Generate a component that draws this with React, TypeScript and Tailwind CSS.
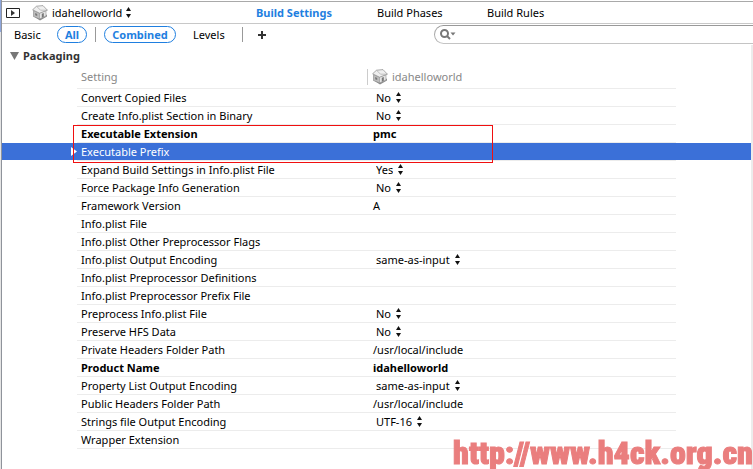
import React, {useState} from 'react';

type Row = {
    name: string;
    value?: string;
    options?: string[];
    bold?: boolean;
};

const yesNo = ["Yes", "No"];
const encodings = ["same-as-input", "UTF-8", "UTF-16", "binary"];

const rows: Row[] = [
    {name: "Convert Copied Files", value: "No", options: yesNo},
    {name: "Create Info.plist Section in Binary", value: "No", options: yesNo},
    {name: "Executable Extension", value: "pmc", bold: true},
    {name: "Executable Prefix"},
    {name: "Expand Build Settings in Info.plist File", value: "Yes", options: yesNo},
    {name: "Force Package Info Generation", value: "No", options: yesNo},
    {name: "Framework Version", value: "A"},
    {name: "Info.plist File"},
    {name: "Info.plist Other Preprocessor Flags"},
    {name: "Info.plist Output Encoding", value: "same-as-input", options: encodings},
    {name: "Info.plist Preprocessor Definitions"},
    {name: "Info.plist Preprocessor Prefix File"},
    {name: "Preprocess Info.plist File", value: "No", options: yesNo},
    {name: "Preserve HFS Data", value: "No", options: yesNo},
    {name: "Private Headers Folder Path", value: "/usr/local/include"},
    {name: "Product Name", value: "idahelloworld", bold: true},
    {name: "Property List Output Encoding", value: "same-as-input", options: encodings},
    {name: "Public Headers Folder Path", value: "/usr/local/include"},
    {name: "Strings file Output Encoding", value: "UTF-16", options: encodings},
    {name: "Wrapper Extension"},
];

function Stepper() {
    return (
        <svg className="pointer-events-none shrink-0" width="5" height="11" viewBox="0 0 5 11" fill="#111">
            <path d="M2.5 0L5 4H0zM2.5 11L0 7h5z"/>
        </svg>
    );
}

function ProjectIcon() {
    return (
        <svg className="shrink-0" width="16" height="16" viewBox="0 0 16 16" strokeLinejoin="round">
            <path d="M1 11l7 4.500 7-4V9.500l-7 3.500z" fill="#8a8a8a"/>
            <path d="M1.500 5.500v6L7.500 14V8z" fill="#bdbdbd" stroke="#888" strokeWidth=".6"/>
            <path d="M7.500 8L14 5.500V11l-6.500 3z" fill="#e4e4e4" stroke="#999" strokeWidth=".6"/>
            <path d="M.6 4.800L4.500 1.200 11 .6l4.400 4.600L7.500 8.200z" fill="#efefef" stroke="#8a8a8a" strokeWidth=".7"/>
            <path d="M4.500 1.200l4 4 6.900 0" fill="none" stroke="#aaa" strokeWidth=".7"/>
            <path d="M9.800 8.800l2-.8v3.800l-2 .9z" fill="#777"/>
            <path d="M3.200 8l2 .9v2.200l-2-.9z" fill="#777"/>
        </svg>
    );
}

export default function App() {
    const [selected, setSelected] = useState("Executable Prefix");

    return (
        <div className="flex min-h-screen overflow-hidden bg-white font-['Noto_Sans',sans-serif] text-[11px] leading-4 text-black">
            <div className="w-px shrink-0 bg-[#e4e4e4]">
                <div className="h-8 bg-[#8ea6dc]"/>
            </div>
            <main className="flex min-w-0 grow flex-col border-l border-[#8f939b]">
                <header className="mt-px flex h-[23px] items-center border-y border-t-[#a9a9a9] border-b-[#c8c8c8]">
                    <button aria-label="Toggle project list" className="ml-1">
                        <svg width="14" height="10" viewBox="0 0 14 10">
                            <path d="M.5.5h13v9H.5z" fill="#fff" stroke="#222"/>
                            <path d="M5 2v6l4-3z" fill="#333"/>
                        </svg>
                    </button>
                    <button className="ml-3 flex w-[102px] items-center gap-1">
                        <ProjectIcon/>
                        idahelloworld
                        <Stepper/>
                    </button>
                    <nav className="ml-[122px] flex whitespace-nowrap">
                        <a href="#settings" className="w-[121px] font-bold text-[#1f7fe0]">Build Settings</a>
                        <a href="#phases" className="w-[110px]">Build Phases</a>
                        <a href="#rules">Build Rules</a>
                    </nav>
                </header>
                <div className="flex h-[21px] items-center">
                    <button className="ml-3 w-[43px] text-left">Basic</button>
                    <button className="h-[17px] w-[30px] rounded-full border border-[#1f7fe0] text-center leading-[14px] font-bold text-[#1f7fe0]">All</button>
                    <span className="mx-2 h-[15px] w-px bg-[#999]"/>
                    <button className="h-[17px] w-[72px] rounded-full border border-[#1f7fe0] text-center leading-[14px] font-bold text-[#1f7fe0]">Combined</button>
                    <button className="ml-[17px] w-[49px] text-left">Levels</button>
                    <span className="h-[15px] w-px bg-[#999]"/>
                    <button aria-label="Add setting" className="ml-[15px]">
                        <svg width="8" height="8" viewBox="0 0 8 8"><path d="M3 0h2v3h3v2H5v3H3V5H0V3h3z" fill="#333"/></svg>
                    </button>
                    <label className="ml-auto flex h-[19px] w-[319px] items-center rounded-l-full border border-r-0 border-t-[#999] border-b-[#c4c4c4] border-l-[#aaa] pl-[5px]">
                        <svg width="16" height="11" viewBox="0 0 16 11">
                            <circle cx="4.500" cy="4.500" r="3.500" fill="none" stroke="#777" strokeWidth="2"/>
                            <path d="M7 7l3 3" stroke="#777" strokeWidth="2"/>
                            <path d="M10.500 3.500h5l-2.500 3z" fill="#777"/>
                        </svg>
                        <input type="search" aria-label="Search settings" className="min-w-0 grow bg-transparent pl-1 outline-none"/>
                    </label>
                </div>
                <section className="relative grow border-r-2 border-[#ececec]">
                    <h2>
                        <button className="flex h-[21px] items-center gap-1 pl-2 font-bold text-[#333]">
                            <svg width="9" height="8" viewBox="0 0 9 8"><path d="M0 0h9L4.500 8z" fill="#777"/></svg>
                            Packaging
                        </button>
                    </h2>
                    <table className="w-full table-fixed border-separate border-spacing-0">
                        <colgroup>
                            <col className="w-[75px]"/>
                            <col className="w-[290px]"/>
                            <col className="w-[309px]"/>
                            <col/>
                        </colgroup>
                        <thead>
                            <tr className="h-[23px] text-[#888]">
                                <td/>
                                <th className="border-b border-[#ececec] p-0 pl-1 text-left font-normal">Setting</th>
                                <th className="border-b border-[#ececec] p-0 text-left font-normal">
                                    <div className="flex items-center gap-1 border-l border-[#ccc] pl-1">
                                        <ProjectIcon/>
                                        idahelloworld
                                    </div>
                                </th>
                                <td/>
                            </tr>
                        </thead>
                        <tbody>
                            {rows.map((row) => {
                                const active = row.name === selected;
                                const fill = active ? " bg-[#3b70d8] bg-clip-padding text-white" : "";
                                const weight = row.bold ? " font-bold" : "";
                                return (
                                    <tr key={row.name} onClick={() => setSelected(row.name)} className="h-[18px]">
                                        <td className={"border-b border-white p-0" + fill}>
                                            {active && (
                                                <svg className="ml-auto" width="6" height="9" viewBox="0 0 6 9"><path d="M0 0v9l6-4.500z" fill="#fff"/></svg>
                                            )}
                                        </td>
                                        <td className={"border-b border-[#ececec] p-0 pl-1 whitespace-nowrap" + fill + weight}>{row.name}</td>
                                        <td className={"border-b border-[#ececec] p-0 pl-1.5" + fill + weight}>
                                            {row.options ? (
                                                <span className="flex h-4 items-center gap-[5px] pl-[3px]">
                                                    <select
                                                        aria-label={row.name}
                                                        defaultValue={row.value}
                                                        className="h-4 appearance-none bg-transparent [field-sizing:content]"
                                                    >
                                                        {row.options.map((option) => <option key={option}>{option}</option>)}
                                                    </select>
                                                    <Stepper/>
                                                </span>
                                            ) : row.value}
                                        </td>
                                        <td className={"border-b border-white p-0" + fill}/>
                                    </tr>
                                );
                            })}
                        </tbody>
                    </table>
                    <div className="pointer-events-none absolute top-[80px] left-[71px] h-[38px] w-[420px] border border-[#f01010]"/>
                </section>
            </main>
            <div className="pointer-events-none fixed right-0 bottom-0 font-['Roboto_Condensed',Impact,sans-serif] text-[32px] leading-8 font-black text-[#ea7e7e] [-webkit-text-stroke:1px_#ea7e7e]">
                http://www.h4ck.org.cn
            </div>
        </div>
    );
}
